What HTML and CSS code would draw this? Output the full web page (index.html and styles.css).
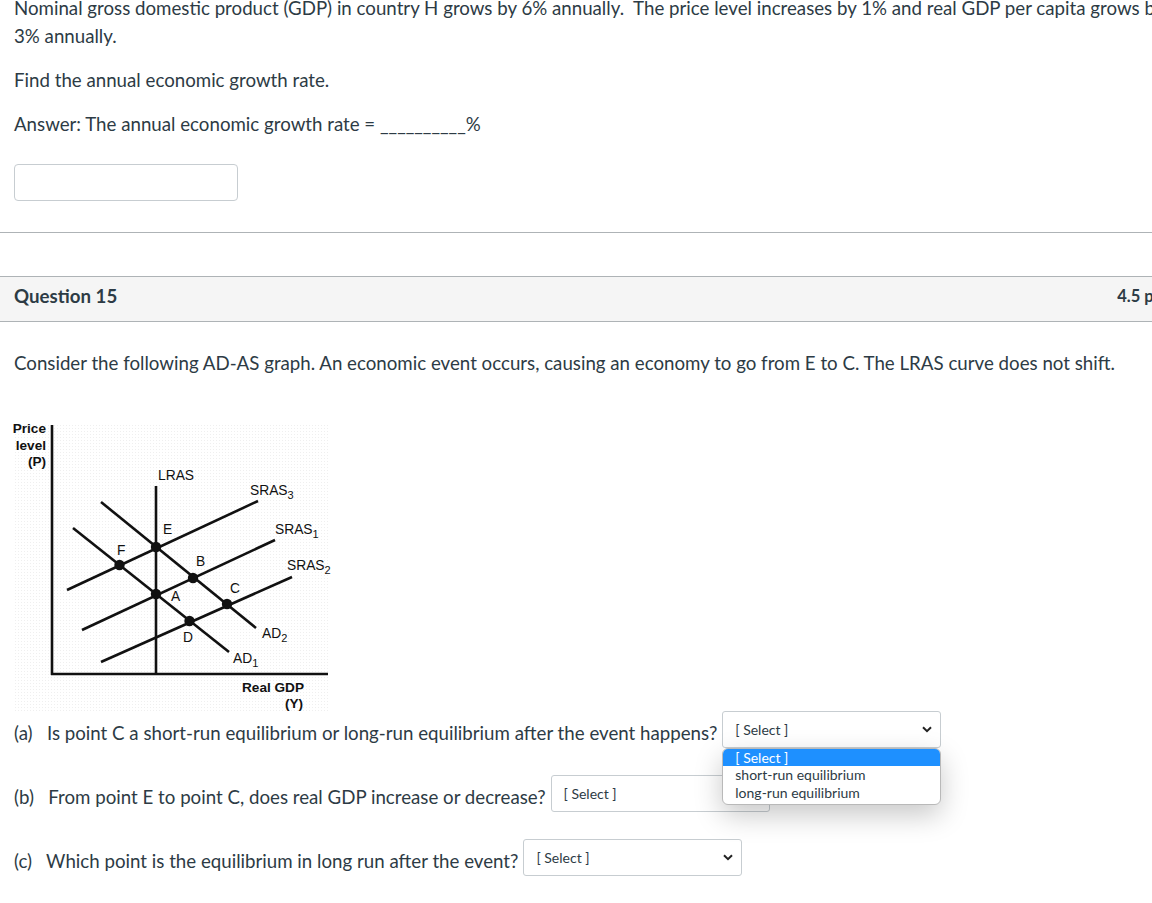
FILE: index.html
```html
<!DOCTYPE html>
<html lang="en">
<head>
<meta charset="utf-8">
<title>Quiz – Question 15</title>
<link rel="stylesheet" href="styles.css">
</head>
<body>
<div class="page">
  <section class="prev">
    <p class="lead">Nominal gross domestic product (GDP) in country H grows by 6% annually.&nbsp; The price level increases by 1% and real GDP per capita grows by 3% annually.</p>
    <p>Find the annual economic growth rate.</p>
    <p>Answer: The annual economic growth rate = __________%</p>
    <div class="answer-input"></div>
  </section>
  <hr class="rule">
  <section class="question">
    <header class="q-header">
      <h2 class="q-title">Question 15</h2>
      <span class="q-pts">4.5 pts</span>
    </header>
    <div class="q-body">
      <p class="q-text">Consider the following AD-AS graph. An economic event occurs, causing an economy to go from E to C. The LRAS curve does not shift.</p>
      <svg class="graph" width="316" height="287" viewBox="14 424 316 287" xmlns="http://www.w3.org/2000/svg">
        <g stroke="#111" stroke-width="2.6" fill="none" stroke-linecap="butt">
          <line x1="52" y1="425" x2="52" y2="675"/>
          <line x1="51" y1="674" x2="328" y2="674"/>
          <line x1="156" y1="486" x2="156" y2="675"/>
          <line x1="67" y1="590" x2="258" y2="501"/>
          <line x1="82" y1="630" x2="275" y2="540"/>
          <line x1="101" y1="662" x2="292" y2="577"/>
          <line x1="101" y1="502" x2="256" y2="628"/>
          <line x1="73" y1="528" x2="229" y2="652"/>
        </g>
        <g fill="#111">
          <circle cx="156" cy="547" r="5.2"/>
          <circle cx="119.5" cy="565" r="5.2"/>
          <circle cx="156" cy="594" r="5.2"/>
          <circle cx="193" cy="578" r="5.2"/>
          <circle cx="227" cy="604" r="5.2"/>
          <circle cx="189.5" cy="621" r="5.2"/>
        </g>
        <g class="lbl-bold" text-anchor="end">
          <text x="46" y="433">Price</text>
          <text x="46" y="450">level</text>
          <text x="46" y="466">(P)</text>
          <text x="304" y="692">Real GDP</text>
          <text x="303" y="708">(Y)</text>
        </g>
        <g class="lbl">
          <text x="158" y="480">LRAS</text>
          <text x="250" y="495">SRAS<tspan class="sub" dy="4">3</tspan></text>
          <text x="275" y="534">SRAS<tspan class="sub" dy="4">1</tspan></text>
          <text x="287" y="570">SRAS<tspan class="sub" dy="4">2</tspan></text>
          <text x="163" y="534">E</text>
          <text x="117" y="555">F</text>
          <text x="196" y="566">B</text>
          <text x="171" y="601">A</text>
          <text x="230" y="593">C</text>
          <text x="183" y="642">D</text>
          <text x="262" y="638">AD<tspan class="sub" dy="4">2</tspan></text>
          <text x="233" y="663">AD<tspan class="sub" dy="4">1</tspan></text>
        </g>
      </svg>

      <div class="part">
        <span class="part-text">(a)&nbsp;&nbsp; Is point C a short-run equilibrium or long-run equilibrium after the event happens?</span>
        <div class="select open">
          <span class="select-value">[ Select ]</span>
          <svg class="chev" width="10" height="7" viewBox="0 0 10 7"><path d="M1 1.2 L5 5.2 L9 1.2" fill="none" stroke="#222" stroke-width="2"/></svg>
          <ul class="options">
            <li class="hl">[ Select ]</li>
            <li>short-run equilibrium</li>
            <li>long-run equilibrium</li>
          </ul>
        </div>
      </div>

      <div class="part">
        <span class="part-text">(b)&nbsp;&nbsp; From point E to point C, does real GDP increase or decrease?</span>
        <div class="select">
          <span class="select-value">[ Select ]</span>
          <svg class="chev" width="10" height="7" viewBox="0 0 10 7"><path d="M1 1.2 L5 5.2 L9 1.2" fill="none" stroke="#222" stroke-width="2"/></svg>
        </div>
      </div>

      <div class="part">
        <span class="part-text">(c)&nbsp;&nbsp; Which point is the equilibrium in long run after the event?</span>
        <div class="select">
          <span class="select-value">[ Select ]</span>
          <svg class="chev" width="10" height="7" viewBox="0 0 10 7"><path d="M1 1.2 L5 5.2 L9 1.2" fill="none" stroke="#222" stroke-width="2"/></svg>
        </div>
      </div>
    </div>
  </section>
</div>
</body>
</html>
```

FILE: styles.css
```css
html, body {
  margin: 0;
  padding: 0;
  overflow: hidden;
  background: #fff;
}
body {
  font-family: Lato, "Open Sans", sans-serif;
  font-size: 18.7px;
  line-height: 28px;
  color: #2d3b45;
}
.page {
  width: 1181px;
}
.prev {
  display: flex;
  flex-direction: column;
  padding: 0 14px;
}
.prev p {
  margin: 0;
}
.prev .lead {
  margin-top: -6px;
}
.prev p + p {
  margin-top: 16px;
}
.answer-input {
  margin-top: 26px;
  width: 224px;
  height: 37px;
  box-sizing: border-box;
  border: 1px solid #c7cdd1;
  border-radius: 4px;
  background: #fff;
}
.rule {
  margin: 31px 0 0;
  border: 0;
  border-top: 1px solid #aeb3b6;
  height: 0;
}
.question {
  margin-top: 43px;
}
.q-header {
  display: flex;
  justify-content: space-between;
  align-items: center;
  height: 44px;
  padding: 0 14px;
  background: #f5f5f5;
  border-top: 1px solid #aeb3b6;
  border-bottom: 1px solid #aeb3b6;
}
.q-title {
  margin: 0 0 7px;
  font-size: 18.7px;
  font-weight: 700;
}
.q-pts {
  margin-bottom: 6px;
  font-size: 16.5px;
  font-weight: 700;
}
.q-body {
  display: flex;
  flex-direction: column;
  align-items: flex-start;
  padding: 0 14px;
}
.q-text {
  margin: 27px 0 0;
}
.graph {
  display: block;
  overflow: visible;
  margin-top: 47px;
  background-color: #fff;
  background-image: radial-gradient(circle, #efefef 0.6px, transparent 0.8px);
  background-size: 3px 3px;
}
.lbl, .lbl-bold {
  font-family: "Liberation Sans", Arial, sans-serif;
  font-size: 13.8px;
  fill: #111;
}
.lbl-bold {
  font-weight: 700;
  font-size: 13.6px;
}
.sub {
  font-size: 11px;
}
.part {
  display: flex;
  align-items: center;
  gap: 5px;
  margin-bottom: 27px;
}
.part-text {
  padding-top: 7px;
  white-space: nowrap;
}
.select {
  position: relative;
  display: flex;
  align-items: center;
  justify-content: space-between;
  box-sizing: border-box;
  width: 219px;
  height: 37px;
  padding: 0 8px 0 12px;
  border: 1px solid #c7cdd1;
  border-radius: 3px;
  background: #fff;
  font-size: 14px;
  line-height: 18px;
}
.select-value {
  color: #2d3b45;
}
.chev {
  display: block;
}
.options {
  position: absolute;
  z-index: 5;
  left: 0;
  top: 100%;
  width: 219px;
  box-sizing: border-box;
  margin: 1px 0 0 -1px;
  padding: 0 0 2px;
  list-style: none;
  background: #fff;
  border: 1px solid #b9b9b9;
  border-radius: 6px;
  overflow: hidden;
  box-shadow: 0 10px 28px rgba(0, 0, 0, 0.22);
  font-size: 14px;
  line-height: 18px;
  color: #2d3b45;
}
.options li {
  padding: 0 12px;
}
.options li.hl {
  background: #1e90ff;
  color: #fff;
  line-height: 17px;
}
```
